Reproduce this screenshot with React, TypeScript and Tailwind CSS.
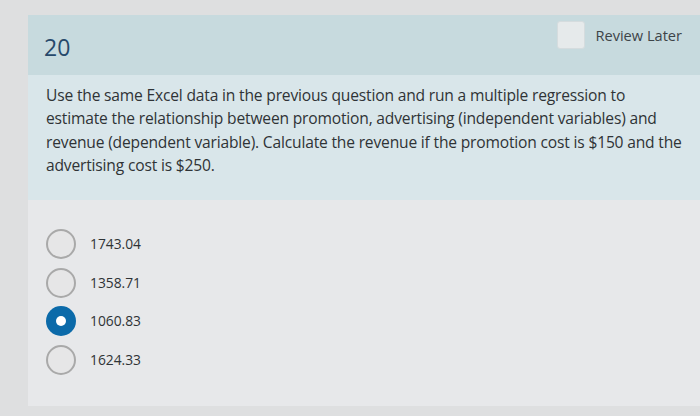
const OPTIONS = ["1743.04", "1358.71", "1060.83", "1624.33"];
const SELECTED = 2;

const QUESTION_LINES = [
  "Use the same Excel data in the previous question and run a multiple regression to",
  "estimate the relationship between promotion, advertising (independent variables) and",
  "revenue (dependent variable). Calculate the revenue if the promotion cost is $150 and the",
  "advertising cost is $250.",
];

export default function App() {
  return (
    <div
      className="h-[416px] w-[700px] overflow-hidden bg-[#dedfe0] pl-[28px] pt-[15px] text-[#333]"
      style={{ fontFamily: '"Open Sans", "Noto Sans", sans-serif' }}
    >
      {/* header band */}
      <div className="flex h-[60px] items-start justify-between bg-[#c7dade]">
        <div className="pl-[16px] pt-[18px] text-[23px] leading-[28px] text-[#27496b]">20</div>
        <div className="flex items-center gap-[10px] pr-[18px] pt-[6px]">
          <span className="block h-[28px] w-[28px] rounded-[3px] border border-[#d5dcde] bg-[#e6eaeb]" />
          <span className="text-[14.6px] leading-[20px] text-[#3d4448]">Review Later</span>
        </div>
      </div>

      {/* question */}
      <div className="h-[125px] bg-[#d9e6ea] pl-[18px] pt-[9px]">
        <p className="whitespace-nowrap text-[15.6px] leading-[23.3px] tracking-[-0.18px] text-[#2f3336]">
          {QUESTION_LINES.map((line) => (
            <span key={line} className="block">
              {line}
            </span>
          ))}
        </p>
      </div>

      {/* answers */}
      <div className="flex h-[206px] flex-col gap-[8.7px] bg-[#e7e8ea] pl-[18px] pt-[29px]">
        {OPTIONS.map((opt, i) => (
          <label key={opt} className="flex h-[30px] items-center gap-[14px]">
            {i === SELECTED ? (
              <span className="flex h-[30px] w-[30px] items-center justify-center rounded-full bg-[#0b6aa9]">
                <span className="h-[10px] w-[10px] rounded-full bg-white" />
              </span>
            ) : (
              <span className="h-[30px] w-[30px] rounded-full border-2 border-[#a9a9a9] bg-[#e6e6e7]" />
            )}
            <span className="text-[13.8px] leading-[18px] text-[#2f3336]">{opt}</span>
          </label>
        ))}
      </div>
    </div>
  );
}
